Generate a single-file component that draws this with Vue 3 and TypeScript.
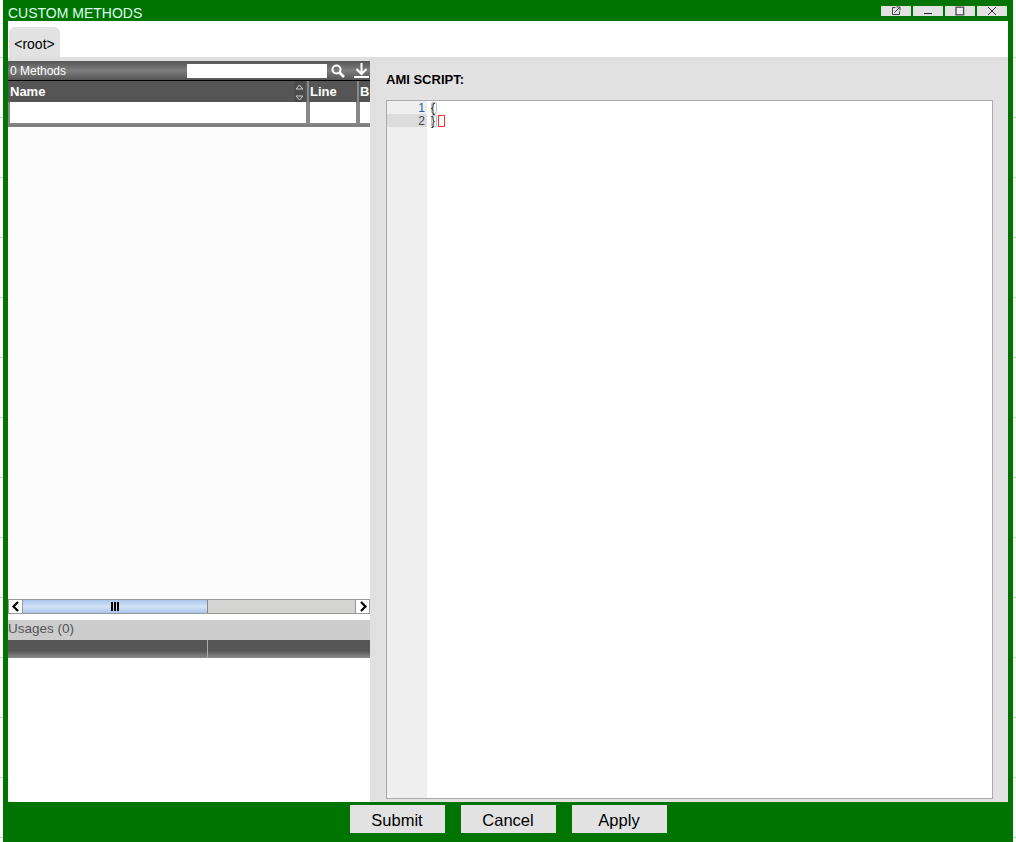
<script setup lang="ts">
const gutterLines: number[] = [1, 2]
const actions: string[] = ['Submit', 'Cancel', 'Apply']
</script>

<template>
  <div class="window">
    <header class="titlebar">
      <span class="title">CUSTOM METHODS</span>
      <div class="winbtns">
        <button class="winbtn" aria-label="Pop out">
          <svg width="10" height="10" viewBox="0 0 10 10" fill="none" stroke="#444" stroke-width="1"><path d="M4.5 1.5H1.5V8.5H8.5V5.5" /><path d="M3.5 6.5L8.5 1.5M5.5 1H9V4.5" /></svg>
        </button>
        <button class="winbtn" aria-label="Minimize">
          <svg width="10" height="10" viewBox="0 0 10 10" fill="none" stroke="#222" stroke-width="1"><path d="M1 7.5H9" /></svg>
        </button>
        <button class="winbtn" aria-label="Maximize">
          <svg width="10" height="10" viewBox="0 0 10 10" fill="none" stroke="#555" stroke-width="1.4"><rect x="1" y="1.2" width="7.6" height="7.6" fill="#eee" /></svg>
        </button>
        <button class="winbtn" aria-label="Close">
          <svg width="10" height="10" viewBox="0 0 10 10" fill="none" stroke="#333" stroke-width="1"><path d="M1 1L9 9M9 1L1 9" /></svg>
        </button>
      </div>
    </header>

    <main class="content">
      <div class="tabbar"><div class="tab">&lt;root&gt;</div></div>
      <div class="panes">
        <section class="left">
          <div class="methods-head">
            <span class="count">0 Methods</span>
            <input class="search" type="text" />
            <svg class="ico-search" width="14" height="14" viewBox="0 0 14 14" fill="none" stroke="#fff"><circle cx="5.5" cy="5.5" r="4" stroke-width="2" /><path d="M8.5 8.5L13 13" stroke-width="2.6" /></svg>
            <svg class="ico-down" width="15" height="15" viewBox="0 0 15 15" fill="none" stroke="#fff" stroke-width="2"><path d="M7.5 0V10M2.5 6L7.5 11L12.5 6M0 14H15" /></svg>
          </div>
          <div class="grid-head">
            <div class="col col-name">
              <span>Name</span>
              <div class="sorter">
                <svg width="9" height="6" viewBox="0 0 9 6" fill="none" stroke="#ccc"><path d="M1 5L4.5 1L8 5Z" /></svg>
                <svg width="9" height="6" viewBox="0 0 9 6" fill="none" stroke="#ccc"><path d="M1 1L4.5 5L8 1Z" /></svg>
              </div>
            </div>
            <div class="col col-line"><span>Line</span></div>
            <div class="col col-b"><span>B</span></div>
          </div>
          <div class="filter-row">
            <div class="cell cell-name"></div>
            <div class="cell cell-line"></div>
            <div class="cell cell-b"></div>
          </div>
          <div class="grid-body"></div>
          <div class="scrollbar">
            <div class="arrow">
              <svg width="10" height="11" viewBox="0 0 10 11" fill="none" stroke="#000" stroke-width="2.2"><path d="M7 1L2.5 5.5L7 10" /></svg>
            </div>
            <div class="thumb"><span class="grip"></span></div>
            <div class="track"></div>
            <div class="arrow arrow-r">
              <svg width="10" height="11" viewBox="0 0 10 11" fill="none" stroke="#000" stroke-width="2.2"><path d="M3 1L7.5 5.5L3 10" /></svg>
            </div>
          </div>
          <div class="usages">Usages (0)</div>
          <div class="usages-head"><div class="uh-col"></div><div class="uh-col2"></div></div>
          <div class="usages-body"></div>
        </section>

        <div class="splitter"></div>

        <section class="right">
          <div class="script-label">AMI SCRIPT:</div>
          <div class="editor">
            <div class="gutter">
              <div v-for="n in gutterLines" :key="n" class="gutter-line" :class="{ active: n === 2 }">{{ n }}</div>
            </div>
            <div class="code">
              <div class="code-line"><span class="brace">{</span></div>
              <div class="code-line"><span class="brace">}</span><span class="cursor"></span></div>
            </div>
          </div>
        </section>
      </div>
    </main>

    <footer class="actions">
      <button v-for="a in actions" :key="a" class="action">{{ a }}</button>
    </footer>
  </div>
</template>

<style>
html, body {
  margin: 0;
  background-color: #fff;
  background-image: repeating-linear-gradient(to bottom, transparent 0, transparent 57px, #b9e2b9 57px, #b9e2b9 58px, transparent 58px, transparent 60px);
}
</style>

<style scoped>
.window {
  box-sizing: border-box;
  width: 1010px;
  height: 842px;
  margin-left: 3px;
  padding: 0 5px;
  background: #007400;
  display: flex;
  flex-direction: column;
  font-family: "Liberation Sans", Arial, sans-serif;
  overflow: hidden;
}
.titlebar {
  height: 21px;
  flex: none;
  display: flex;
  justify-content: space-between;
}
.title {
  color: #dfffef;
  font-size: 14px;
  line-height: 15px;
  padding-top: 6px;
}
.winbtns {
  display: flex;
  gap: 2px;
  padding: 6px 1px 0 0;
  align-items: flex-start;
}
.winbtn {
  width: 30px;
  height: 10px;
  border: 0;
  padding: 0;
  background: #e2e2e2;
  display: flex;
  align-items: center;
  justify-content: center;
}
.content {
  height: 781px;
  flex: none;
  background: #fff;
  display: flex;
  flex-direction: column;
}
.tabbar {
  height: 36px;
  flex: none;
  padding: 6px 0 0 1px;
  box-sizing: border-box;
}
.tab {
  width: 51px;
  height: 30px;
  background: #e2e2e2;
  border-radius: 6px 6px 0 0;
  font-size: 14px;
  line-height: 34px;
  text-align: center;
  color: #000;
}
.panes {
  flex: 1;
  min-height: 0;
  display: flex;
  border-top: 4px solid #dfdfdf;
}
.left {
  width: 362px;
  flex: none;
  display: flex;
  flex-direction: column;
  background: #fff;
  overflow: hidden;
}
.methods-head {
  height: 19px;
  flex: none;
  box-sizing: border-box;
  display: flex;
  align-items: center;
  background: linear-gradient(to bottom, #555 0%, #7e7e7e 50%, #555 100%);
}
.count {
  color: #fff;
  font-size: 12px;
  padding-left: 2px;
  width: 177px;
  flex: none;
}
.search {
  box-sizing: border-box;
  width: 140px;
  height: 14px;
  border: 0;
  padding: 0;
  background: #fff;
  flex: none;
}
.ico-search { margin-left: 4px; flex: none; }
.ico-down { margin-left: 9px; flex: none; }
.grid-head {
  height: 21px;
  flex: none;
  display: flex;
  background: #555;
  border-top: 1px solid #000;
}
.col {
  box-sizing: border-box;
  color: #fff;
  font-size: 13px;
  font-weight: bold;
  line-height: 21px;
  padding: 0 1px;
  border-right: 2px solid #888;
  position: relative;
  flex: none;
}
.col span { display: inline-block; }
.col-name { width: 301px; padding-left: 2px; }
.col-line { width: 50px; }
.col-b { width: 11px; border-right: 0; overflow: hidden; }
.sorter {
  position: absolute;
  right: 2px;
  top: 0;
  bottom: 0;
  width: 11px;
  background: #4c4c4c;
  display: flex;
  flex-direction: column;
  align-items: center;
  padding-top: 3px;
  gap: 5px;
  box-sizing: border-box;
}
.sorter svg { display: block; }
.filter-row {
  height: 22px;
  flex: none;
  display: flex;
  background: #888;
}
.cell {
  background: #fff;
  flex: none;
  margin-bottom: 1px;
}
.cell-name { width: 296px; margin-left: 2px; margin-right: 4px; }
.cell-line { width: 46px; margin-right: 4px; }
.cell-b { width: 10px; }
.grid-body {
  height: 472px;
  flex: none;
  background: #fcfcfc;
  border-top: 3px solid;
  border-image: linear-gradient(to bottom, #808080, #a0a0a0) 1;
}
.scrollbar {
  height: 15px;
  flex: none;
  box-sizing: border-box;
  display: flex;
  border-top: 1px solid #999;
  border-bottom: 1px solid #999;
  background: #d4d4d2;
}
.arrow {
  width: 15px;
  flex: none;
  background: #fff;
  display: flex;
  align-items: center;
  justify-content: center;
  box-sizing: border-box;
  border-right: 1px solid #999;
  border-left: 1px solid #999;
}
.thumb {
  width: 185px;
  flex: none;
  box-sizing: border-box;
  background: linear-gradient(to bottom, #a8c6ea 0%, #d4e2f6 50%, #a8c6ea 100%);
  border-right: 1px solid #888;
  display: flex;
  align-items: center;
  justify-content: center;
}
.grip {
  width: 8px;
  height: 9px;
  background: repeating-linear-gradient(to right, #000 0, #000 2px, transparent 2px, transparent 3px);
}
.track { flex: 1; }
.usages {
  margin-top: 6px;
  height: 20px;
  flex: none;
  background: #ccc;
  color: #555;
  font-size: 13.5px;
  line-height: 17px;
}
.usages-head {
  height: 18px;
  flex: none;
  display: flex;
  background: linear-gradient(to bottom, #555 0%, #555 60%, #8c8c8c 100%);
}
.uh-col {
  width: 200px;
  flex: none;
  box-sizing: border-box;
  border-right: 1px solid #aaa;
}
.uh-col2 { flex: 1; }
.usages-body { flex: 1; background: #fff; }
.splitter {
  width: 6px;
  flex: none;
  background: #e0e0e0;
}
.right {
  flex: 1;
  min-width: 0;
  box-sizing: border-box;
  background: #e2e2e2;
  padding: 0 15px 3px 10px;
  display: flex;
  flex-direction: column;
}
.script-label {
  height: 39px;
  flex: none;
  font-size: 13px;
  font-weight: bold;
  line-height: 38px;
  color: #000;
}
.editor {
  flex: 1;
  min-height: 0;
  box-sizing: border-box;
  border: 1px solid #aaa;
  background: #fff;
  display: flex;
}
.gutter {
  width: 40px;
  flex: none;
  background: #efefef;
}
.gutter-line {
  height: 13px;
  font-size: 12px;
  line-height: 14px;
  text-align: right;
  padding-right: 2px;
  color: #2060a0;
}
.gutter-line.active {
  background: #dcdcdc;
  color: #444;
}
.code {
  flex: 1;
  padding: 1px 0 0 4px;
  font-size: 12px;
  line-height: 12px;
}
.code-line {
  height: 13px;
  display: flex;
  align-items: flex-start;
}
.brace {
  box-sizing: border-box;
  color: #111;
  width: 6px;
  height: 12px;
  flex: none;
  border: 1px solid #c0c0c0;
  border-radius: 2px;
  line-height: 10px;
  text-indent: -1px;
}
.cursor {
  box-sizing: border-box;
  width: 7px;
  height: 12px;
  border: 1px solid #ff3030;
  margin-left: 1px;
  flex: none;
}
.actions {
  flex: 1;
  display: flex;
  justify-content: center;
  gap: 16px;
  padding-top: 3px;
  align-items: flex-start;
}
.action {
  box-sizing: border-box;
  width: 95px;
  height: 28px;
  border: 0;
  padding: 2px 0 0;
  background: #e2e2e2;
  color: #000;
  font-family: "Liberation Sans", Arial, sans-serif;
  font-size: 16.5px;
}
</style>
